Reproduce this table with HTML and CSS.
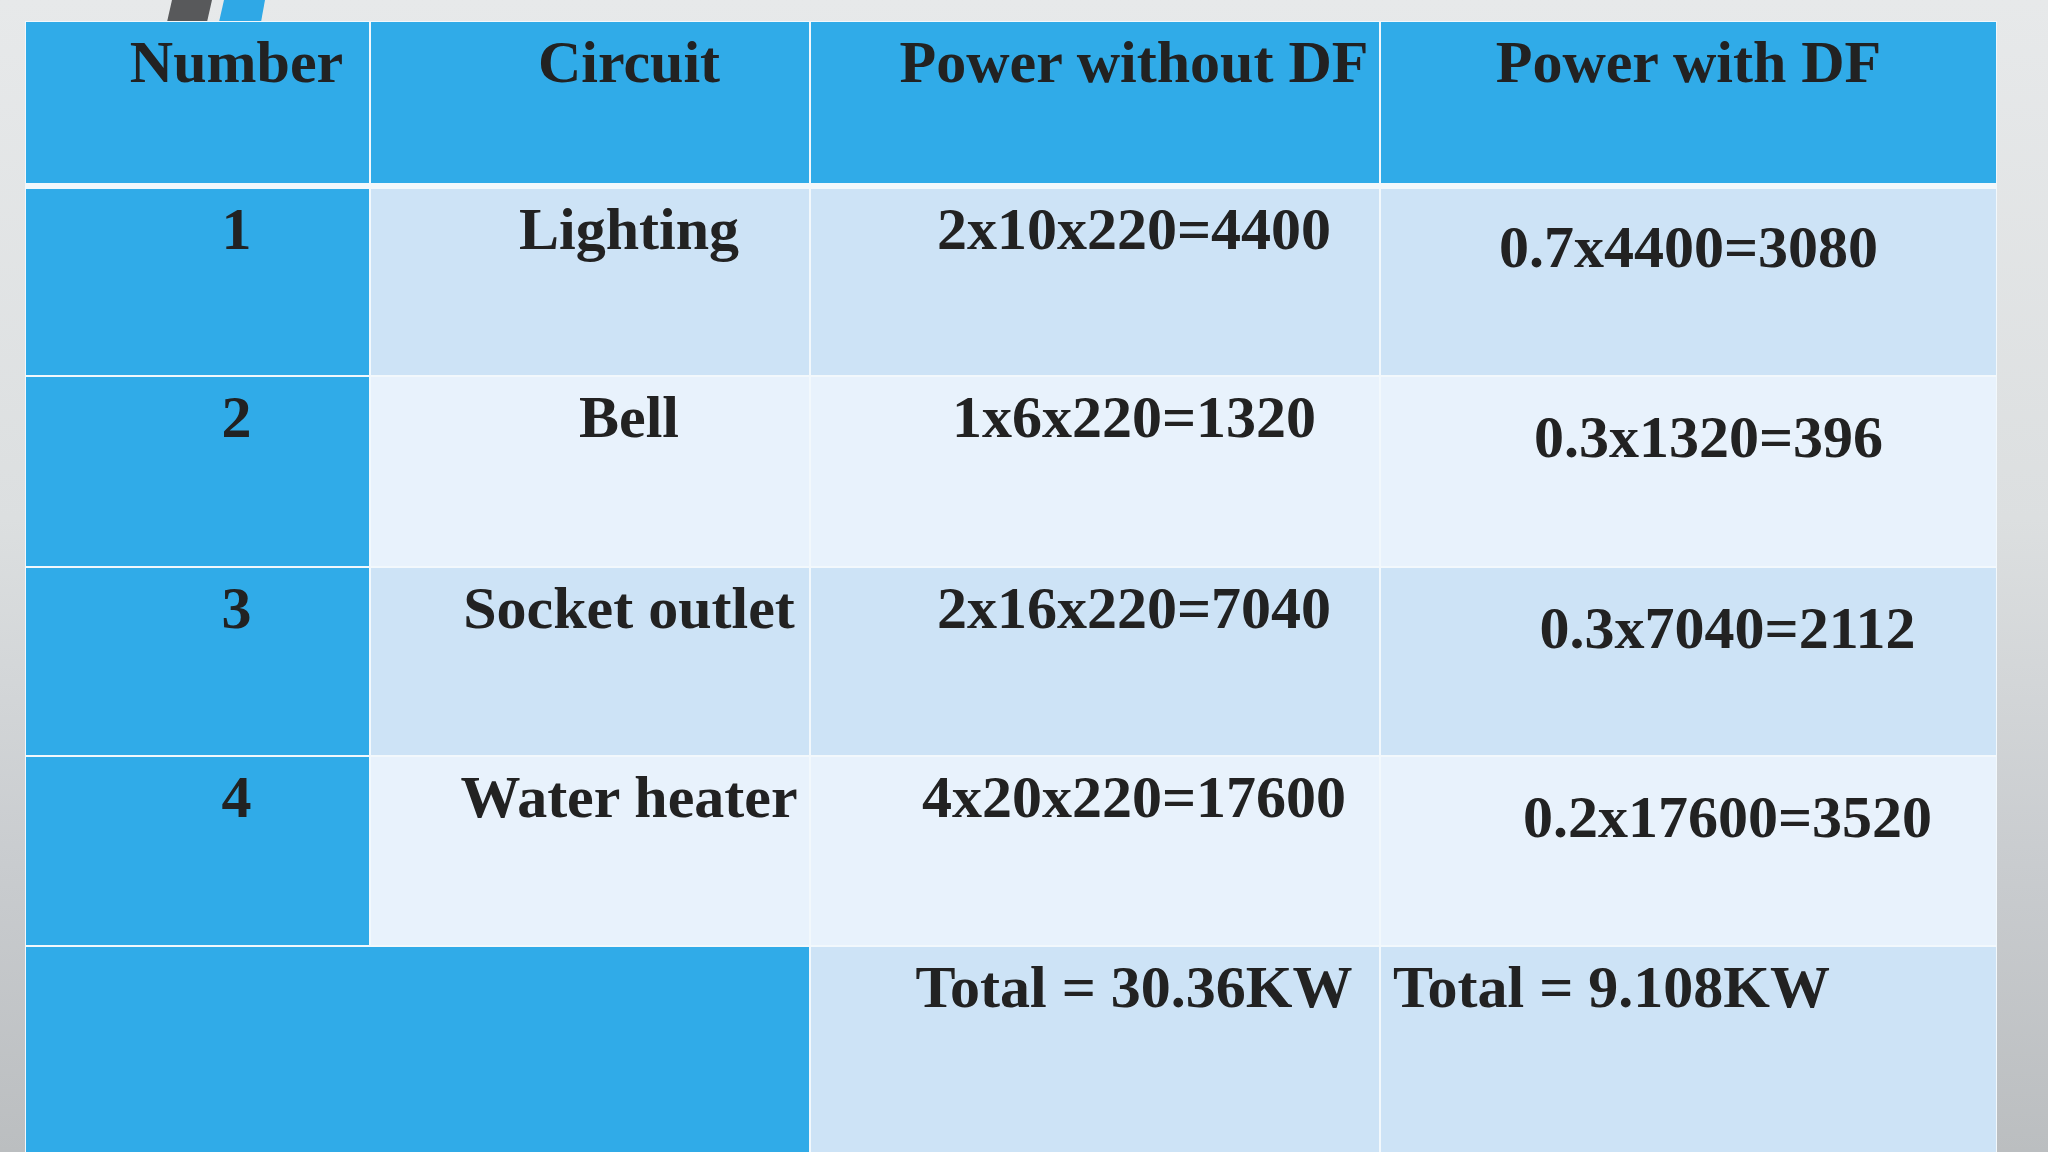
FILE: index.html
```html
<!DOCTYPE html>
<html lang="en">
<head>
<meta charset="utf-8">
<title>Power with DF</title>
<link rel="stylesheet" href="styles.css">
</head>
<body>
<svg class="decor" width="300" height="22" viewBox="0 0 300 22" aria-hidden="true">
  <polygon points="172,0 212,0 207,22 167,22" fill="#58595b"/>
  <polygon points="224,0 265,0 261,22 219,22" fill="#2fa8e6"/>
</svg>
<main class="table">
  <div class="cell head off">Number</div>
  <div class="cell head off">Circuit</div>
  <div class="cell head off">Power without DF</div>
  <div class="cell head">Power with DF</div>

  <div class="cell blue off">1</div>
  <div class="cell odd off">Lighting</div>
  <div class="cell odd off">2x10x220=4400</div>
  <div class="cell odd df1">0.7x4400=3080</div>

  <div class="cell blue off">2</div>
  <div class="cell even off">Bell</div>
  <div class="cell even off">1x6x220=1320</div>
  <div class="cell even df2">0.3x1320=396</div>

  <div class="cell blue off">3</div>
  <div class="cell odd off">Socket outlet</div>
  <div class="cell odd off">2x16x220=7040</div>
  <div class="cell odd df3">0.3x7040=2112</div>

  <div class="cell blue off">4</div>
  <div class="cell even off">Water heater</div>
  <div class="cell even off">4x20x220=17600</div>
  <div class="cell even df3">0.2x17600=3520</div>

  <div class="cell blue span2"></div>
  <div class="cell odd off">Total = 30.36KW</div>
  <div class="cell odd left">Total = 9.108KW</div>
</main>
</body>
</html>
```

FILE: styles.css
```css
html, body {
  margin: 0;
  padding: 0;
}

body {
  width: 2048px;
  height: 1152px;
  overflow: hidden;
  position: relative;
  background: linear-gradient(to bottom, #e7e9ea 0%, #dcdfe0 45%, #c9cccf 75%, #bbbec0 100%);
  font-family: "Liberation Serif", "Times New Roman", serif;
}

.decor {
  position: absolute;
  left: 0;
  top: 0;
}

.table {
  position: relative;
  margin: 21px 0 0 25px;
  width: max-content;
  display: grid;
  grid-template-columns: 343px 438px 568px 615px;
  grid-template-rows: 165px 186px 189px 187px 188px 260px;
  gap: 2px;
  padding: 1px;
  background: #f2f8fc;
}

.cell {
  font-weight: bold;
  font-size: 60px;
  line-height: 69px;
  color: #222222;
  text-align: center;
  padding-top: 6px;
  white-space: nowrap;
  box-sizing: border-box;
}

.head {
  background: #30abe8;
  margin-bottom: 4px;
}

.blue {
  background: #30abe8;
}

.odd {
  background: #cde3f6;
}

.even {
  background: #e8f2fc;
}

.off {
  padding-left: 78px;
}

.df1 {
  padding-top: 24px;
}

.df2 {
  padding-top: 26px;
  padding-left: 40px;
}

.df3 {
  padding-top: 26px;
  padding-left: 78px;
}

.left {
  text-align: left;
  padding-left: 12px;
}

.span2 {
  grid-column: span 2;
}
```
